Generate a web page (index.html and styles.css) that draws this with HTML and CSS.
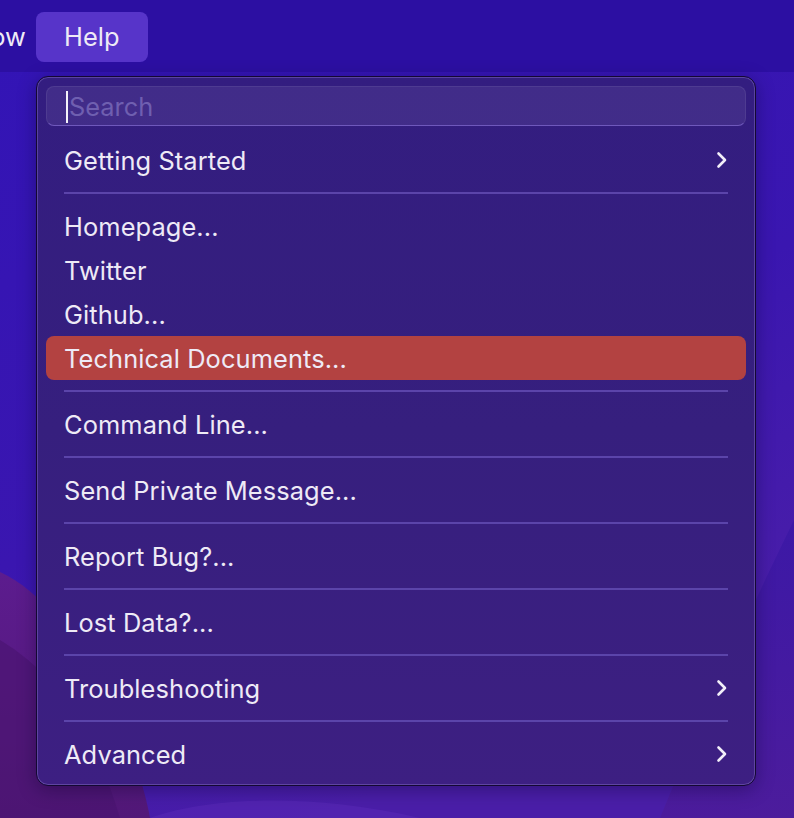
FILE: index.html
```html
<!DOCTYPE html>
<html lang="en">
<head>
<meta charset="utf-8">
<title>Help menu</title>
<link rel="stylesheet" href="styles.css">
</head>
<body>
<div class="desktop">
  <svg class="wallpaper" viewBox="0 0 794 818" preserveAspectRatio="none" aria-hidden="true">
    <defs>
      <linearGradient id="wbase" x1="0" y1="0" x2="0.4" y2="1">
        <stop offset="0" stop-color="#3214b6"/>
        <stop offset="0.6" stop-color="#3a16b0"/>
        <stop offset="1" stop-color="#4a1ea8"/>
      </linearGradient>
      <linearGradient id="wmag" x1="0" y1="0" x2="0" y2="1">
        <stop offset="0" stop-color="#5c1c8e"/>
        <stop offset="1" stop-color="#521878"/>
      </linearGradient>
      <linearGradient id="wright" x1="0" y1="0" x2="0" y2="1">
        <stop offset="0" stop-color="#3c18a6"/>
        <stop offset="1" stop-color="#4c1c9c"/>
      </linearGradient>
    </defs>
    <rect width="794" height="818" fill="url(#wbase)"/>
    <path d="M0 572 C40 590 80 640 110 700 C130 740 145 790 150 818 L0 818 Z" fill="url(#wmag)"/>
    <path d="M0 640 C50 670 90 720 120 818 L0 818 Z" fill="#4a1470" opacity="0.6"/>
    <path d="M794 520 L794 818 L660 818 C700 720 750 610 794 520 Z" fill="url(#wright)"/>
    <path d="M150 818 C200 800 300 790 420 818 Z" fill="#5a2ab8" opacity="0.5"/>
  </svg>

  <header class="menubar">
    <span class="menubar-item menubar-item--clipped">ow</span>
    <span class="menubar-item menubar-item--open">Help</span>
  </header>

  <nav class="menu">
    <div class="search">
      <span class="caret"></span>
      <span class="search-placeholder">Search</span>
    </div>
    <ul class="menu-list">
      <li class="menu-item">Getting Started
        <svg class="chevron" viewBox="0 0 12 18"><path d="M2.5 2.5 L9 9 L2.5 15.5"/></svg>
      </li>
      <li class="separator"></li>
      <li class="menu-item">Homepage...</li>
      <li class="menu-item">Twitter</li>
      <li class="menu-item">Github...</li>
      <li class="menu-item menu-item--active">Technical Documents...</li>
      <li class="separator"></li>
      <li class="menu-item">Command Line...</li>
      <li class="separator"></li>
      <li class="menu-item">Send Private Message...</li>
      <li class="separator"></li>
      <li class="menu-item">Report Bug?...</li>
      <li class="separator"></li>
      <li class="menu-item">Lost Data?...</li>
      <li class="separator"></li>
      <li class="menu-item">Troubleshooting
        <svg class="chevron" viewBox="0 0 12 18"><path d="M2.5 2.5 L9 9 L2.5 15.5"/></svg>
      </li>
      <li class="separator"></li>
      <li class="menu-item">Advanced
        <svg class="chevron" viewBox="0 0 12 18"><path d="M2.5 2.5 L9 9 L2.5 15.5"/></svg>
      </li>
    </ul>
  </nav>
</div>
</body>
</html>
```

FILE: styles.css
```css
* { box-sizing: border-box; }

html, body {
  margin: 0;
  padding: 0;
  width: 794px;
  height: 818px;
  overflow: hidden;
}

body {
  font-family: Inter, "Noto Sans", "Liberation Sans", sans-serif;
  color: #eeeaf6;
  background: #3214b6;
}

.desktop {
  position: relative;
  width: 794px;
  height: 818px;
  overflow: hidden;
}

.wallpaper {
  position: absolute;
  inset: 0;
  width: 794px;
  height: 818px;
  z-index: 0;
}

.menubar {
  position: relative;
  z-index: 1;
  height: 72px;
  padding-top: 1px;
  background: #2c0fa2;
  display: flex;
  align-items: center;
  gap: 10px;
  font-size: 25.4px;
  letter-spacing: 0.1px;
}

.menubar-item {
  height: 50px;
  display: flex;
  align-items: center;
  padding: 0 28px;
  border-radius: 8px;
}

.menubar-item--clipped {
  padding: 0;
  width: 26px;
  overflow: hidden;
  justify-content: flex-end;
}

.menubar-item--open {
  background: #5734c9;
}

.menu {
  position: relative;
  z-index: 2;
  margin: 4px 0 0 36px;
  width: 720px;
  height: 710px;
  padding: 9px;
  border: 1px solid #140833;
  border-radius: 12px;
  background: linear-gradient(180deg, #331d80 0%, #361f7e 50%, #3d1f82 100%);
  box-shadow: inset 0 0 0 1px rgba(160, 140, 220, 0.35), 0 4px 18px rgba(10, 0, 40, 0.35);
}

.search {
  height: 40px;
  border-radius: 8px;
  background: rgba(255, 255, 255, 0.07);
  border: 1px solid rgba(255, 255, 255, 0.07);
  border-bottom-color: rgba(150, 125, 230, 0.55);
  display: flex;
  align-items: center;
  padding-left: 19px;
  padding-top: 1px;
  margin-bottom: 12px;
}

.caret {
  width: 2px;
  height: 32px;
  background: #f4f2fa;
  margin-right: 1px;
}

.search-placeholder {
  font-size: 25.4px;
  color: #6f5fb0;
}

.menu-list {
  list-style: none;
  margin: 0;
  padding: 0;
}

.menu-item {
  height: 44px;
  display: flex;
  align-items: center;
  justify-content: space-between;
  padding: 1px 18px 0;
  font-size: 25.4px;
  letter-spacing: 0.1px;
  border-radius: 8px;
}

.menu-item--active {
  background: #b34241;
}

.separator {
  height: 22px;
  display: flex;
  align-items: center;
  padding: 0 18px;
}

.separator::before {
  content: "";
  display: block;
  width: 100%;
  height: 2px;
  background: #5b44aa;
}

.chevron {
  width: 12px;
  height: 18px;
  margin-top: -1px;
  fill: none;
  stroke: #f1eef8;
  stroke-width: 2.6;
  stroke-linecap: round;
  stroke-linejoin: round;
}
```
